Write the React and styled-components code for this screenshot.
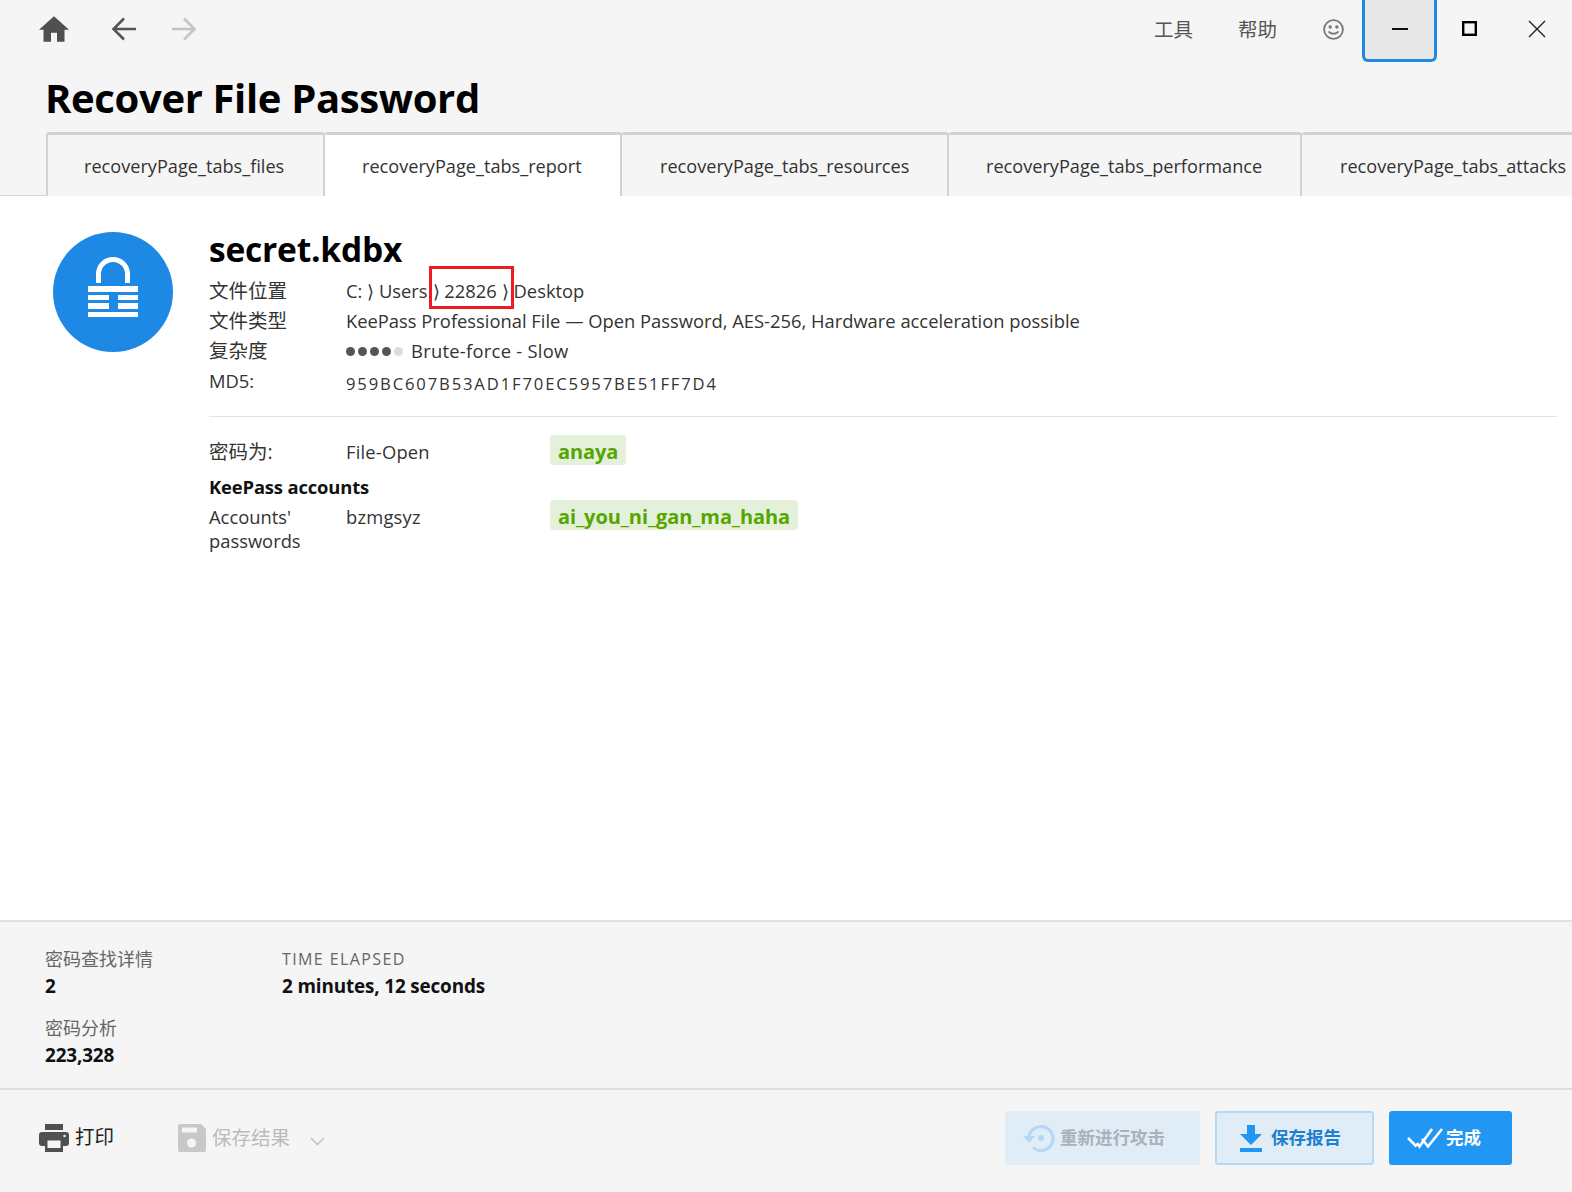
import styled, { createGlobalStyle } from 'styled-components';

const FONT = '"Open Sans", "Noto Sans CJK SC", sans-serif';

const GlobalStyle = createGlobalStyle`
  html, body {
    margin: 0;
    padding: 0;
    background: #f5f5f5;
    font-family: ${FONT};
    color: #333;
  }
`;

const Page = styled.div`
  width: 1572px;
  height: 1192px;
  display: flex;
  flex-direction: column;
  overflow: hidden;
  background: #f5f5f5;
`;

const TopBar = styled.div`
  height: 62px;
  display: flex;
  align-items: flex-start;
  padding-left: 39px;
`;

const NavIcon = styled.div`
  width: ${(p) => p.$w}px;
  height: 62px;
  display: flex;
  align-items: center;
  color: ${(p) => p.$color};
  margin-top: -2px;
`;

const Spacer = styled.div`
  flex: 1;
`;

const MenuItem = styled.div`
  width: ${(p) => p.$w}px;
  height: 62px;
  line-height: 60px;
  font-size: 19.5px;
  color: #555;
`;

const WinButton = styled.div`
  width: ${(p) => p.$w}px;
  height: 62px;
  box-sizing: border-box;
  display: flex;
  align-items: center;
  justify-content: center;
  padding-bottom: ${(p) => (p.$focused ? 1 : 5)}px;
  ${(p) =>
    p.$focused &&
    `
    background: #e8e8e8;
    border: 3px solid #1e88e5;
    border-top: none;
    border-radius: 0 0 6px 6px;
  `}
`;

const Title = styled.h1`
  margin: 0;
  padding-left: 45px;
  height: 70px;
  line-height: 72px;
  font-size: 40px;
  font-weight: 700;
  letter-spacing: -0.35px;
  color: #000;
`;

const Tabs = styled.div`
  height: 64px;
  display: flex;
  padding-left: 46px;
  position: relative;
  flex-shrink: 0;
  &::before {
    content: '';
    position: absolute;
    left: 0;
    bottom: 0;
    width: 46px;
    height: 1px;
    background: #d4d4d4;
  }
`;

const Tab = styled.div`
  width: ${(p) => p.$w}px;
  flex-shrink: 0;
  box-sizing: border-box;
  border: 2px solid #d2d2d2;
  border-top-width: 3px;
  border-bottom: none;
  border-right-width: ${(p) => (p.$last ? 0 : 2)}px;
  border-left-width: ${(p) => (p.$first ? 2 : 0)}px;
  border-radius: 3px 3px 0 0;
  background: ${(p) => (p.$active ? '#fff' : '#f5f5f5')};
  padding-left: ${(p) => p.$pad}px;
  line-height: 62px;
  font-size: 18.15px;
  white-space: nowrap;
  color: #333;
`;

const Content = styled.div`
  flex: 1;
  min-height: 0;
  background: #fff;
  display: flex;
  padding: 36px 15px 0 53px;
`;

const Emblem = styled.div`
  width: 120px;
  height: 120px;
  box-sizing: border-box;
  padding-bottom: 10px;
  border-radius: 50%;
  background: #1e88e5;
  flex-shrink: 0;
  display: flex;
  align-items: center;
  justify-content: center;
`;

const Details = styled.div`
  flex: 1;
  margin-left: 36px;
`;

const FileName = styled.h2`
  margin: 0 0 6px;
  height: 38px;
  line-height: 34px;
  font-size: 33.5px;
  font-weight: 700;
  letter-spacing: -0.2px;
  color: #000;
`;

const InfoRow = styled.div`
  display: flex;
  height: 30px;
  line-height: 30px;
`;

const Label = styled.div`
  width: 137px;
  flex-shrink: 0;
  font-size: ${(p) => (p.$latin ? 18.35 : 19.5)}px;
  color: #333;
`;

const Value = styled.div`
  font-size: 18.35px;
  color: #333;
  display: flex;
  align-items: center;
  white-space: nowrap;
`;

const Highlight = styled.span`
  display: inline-block;
  box-sizing: border-box;
  height: 43px;
  margin: 0 0 7px 1px;
  padding: 0 2px 0 1px;
  border: 3px solid #ed1c24;
  line-height: 44px;
`;

const Dots = styled.span`
  display: inline-flex;
  gap: 3px;
  margin-right: 8px;
`;

const Dot = styled.i`
  display: block;
  width: 9px;
  height: 9px;
  border-radius: 50%;
  background: ${(p) => (p.$off ? '#dcdcdc' : '#555')};
`;

const Speed = styled.span`
  letter-spacing: 0.28px;
`;

const Hash = styled.span`
  font-size: 16.6px;
  letter-spacing: 1.87px;
  padding-top: 6px;
`;

const Divider = styled.div`
  height: 1px;
  background: #e3e3e3;
  margin: 20px 0 18px;
`;

const ResultRow = styled.div`
  display: grid;
  grid-template-columns: 137px 204px 1fr;
  align-items: start;
  line-height: 24px;
  font-size: 18.35px;
  margin-bottom: ${(p) => p.$gap}px;
`;

const ResultLabel = styled.div`
  font-size: ${(p) => (p.$cjk ? 19.5 : 18.35)}px;
  padding-top: 5px;
  line-height: 24px;
`;

const ResultName = styled.div`
  padding-top: 5px;
  letter-spacing: 0.2px;
`;

const Password = styled.span`
  display: inline-block;
  height: 30px;
  line-height: 33px;
  padding: 0 8px;
  border-radius: 4px;
  background: #e5f0da;
  color: #55a600;
  font-size: 20px;
  font-weight: 700;
  letter-spacing: -0.1px;
`;

const SectionTitle = styled.div`
  font-size: 18.4px;
  font-weight: 700;
  line-height: 28px;
  color: #111;
  letter-spacing: -0.15px;
  margin-bottom: -1px;
`;

const Stats = styled.div`
  height: 170px;
  box-sizing: border-box;
  flex-shrink: 0;
  border-top: 2px solid #e0e0e0;
  border-bottom: 2px solid #dedede;
  padding: 25px 45px 0;
  display: grid;
  grid-template-columns: 237px 1fr;
  grid-auto-rows: 69px;
`;

const Stat = styled.div`
  display: flex;
  flex-direction: column;
`;

const StatLabel = styled.div`
  font-size: ${(p) => (p.$latin ? 16 : 18)}px;
  letter-spacing: ${(p) => (p.$latin ? 1.4 : 0)}px;
  line-height: 24px;
  color: #666;
`;

const StatValue = styled.div`
  font-size: 18.9px;
  font-weight: 700;
  line-height: 30px;
  color: #111;
  letter-spacing: -0.15px;
`;

const Actions = styled.div`
  height: 102px;
  box-sizing: border-box;
  flex-shrink: 0;
  display: flex;
  align-items: flex-start;
  padding: 21px 60px 0 39px;
`;

const TextAction = styled.div`
  display: flex;
  align-items: center;
  height: 54px;
  font-size: 19.5px;
  color: ${(p) => p.$color};
  margin-right: ${(p) => p.$mr}px;
  gap: ${(p) => p.$gap}px;
`;

const ActionText = styled.span`
  margin-bottom: ${(p) => p.$lift}px;
`;

const Chevron = styled.svg`
  margin: 6px 0 0 14px;
`;

const Button = styled.div`
  box-sizing: border-box;
  width: ${(p) => p.$w}px;
  height: 54px;
  margin-left: ${(p) => p.$ml}px;
  padding-left: ${(p) => p.$pad}px;
  border-radius: 3px;
  display: flex;
  align-items: center;
  gap: ${(p) => p.$gap}px;
  font-size: 17.5px;
  font-weight: 700;
  background: ${(p) => p.$bg};
  color: ${(p) => p.$color};
  border: ${(p) => (p.$outlined ? '2px solid #b5d8f5' : 'none')};
`;

const HomeIcon = () => (
  <svg width="30" height="26" viewBox="2 3 20 17" fill="currentColor">
    <path d="M10 20v-6h4v6h5v-8h3L12 3 2 12h3v8z" />
  </svg>
);

const LockIcon = () => (
  <svg width="50" height="60" viewBox="0 0 50 60" fill="#fff">
    <path d="M8 26V17a17 17 0 0 1 34 0v9h-5V17a12 12 0 0 0-24 0v9z" />
    <rect y="29" width="50" height="6" />
    <rect y="38" width="21" height="5" />
    <rect x="30" y="38" width="20" height="5" />
    <rect y="46" width="21" height="6" />
    <rect x="30" y="46" width="20" height="6" />
    <rect y="55" width="50" height="5" />
  </svg>
);

const ArrowIcon = ({ flip }) => (
  <svg
    width="26"
    height="24"
    viewBox="0 0 26 24"
    fill="none"
    stroke="currentColor"
    strokeWidth="2.6"
    style={flip ? { transform: 'scaleX(-1)' } : undefined}
  >
    <path d="M25 12H2M13 1.5 2.5 12 13 22.5" />
  </svg>
);

const SmileIcon = () => (
  <svg width="21" height="21" viewBox="0 0 21 21" fill="none" stroke="#777" strokeWidth="1.8">
    <circle cx="10.5" cy="10.5" r="9.4" />
    <circle cx="7.2" cy="8" r="0.8" fill="#777" />
    <circle cx="13.8" cy="8" r="0.8" fill="#777" />
    <path d="M5.8 12.3c1.2 3 8.2 3 9.4 0" />
  </svg>
);

const CloseIcon = () => (
  <svg width="18" height="18" viewBox="0 0 18 18" stroke="#222" strokeWidth="1.4">
    <path d="M1 1l16 16M17 1 1 17" />
  </svg>
);

const PrintIcon = () => (
  <svg width="30" height="28" viewBox="0 0 30 28" fill="#505050">
    <rect x="6" width="18" height="6" />
    <rect y="8" width="30" height="14" rx="3" />
    <rect x="6" y="15" width="18" height="13" />
    <rect x="8.5" y="16.5" width="13" height="7.5" fill="#f5f5f5" />
    <circle cx="25.5" cy="12" r="1.2" fill="#f5f5f5" />
  </svg>
);

const SaveIcon = () => (
  <svg width="28" height="28" viewBox="0 0 28 28">
    <path d="M2 0h21l5 5v21a2 2 0 0 1-2 2H2a2 2 0 0 1-2-2V2a2 2 0 0 1 2-2z" fill="#c8c8c8" />
    <rect x="4" y="3.5" width="15" height="5" fill="#f5f5f5" />
    <circle cx="13.5" cy="19" r="4.5" fill="#f5f5f5" />
  </svg>
);

const RetryIcon = () => (
  <svg width="32" height="30" viewBox="0 0 32 30" fill="none" stroke="#b3d7f5" strokeWidth="3">
    <path d="M6 15a12 12 0 1 1 4 9.5" />
    <path d="M0 13h12l-6 7z" fill="#b3d7f5" stroke="none" />
    <circle cx="18" cy="15" r="3" fill="#b3d7f5" stroke="none" />
  </svg>
);

const DownloadIcon = () => (
  <svg width="22" height="27" viewBox="0 0 22 27" fill="#2196f3">
    <path d="M7 0h8v9h7L11 20 0 9h7z" />
    <rect y="23" width="22" height="4" />
  </svg>
);

const DoubleCheckIcon = () => (
  <svg width="36" height="24" viewBox="0 0 36 24" fill="none" stroke="#fff" strokeWidth="2.6">
    <path d="M1 12l8.5 8.5M10 17l2.5 3.5L25 3M15 13l6 7.5L35 3" />
  </svg>
);

const tabs = [
  { name: 'recoveryPage_tabs_files', w: 279, pad: 36, first: true },
  { name: 'recoveryPage_tabs_report', w: 297, pad: 37, active: true },
  { name: 'recoveryPage_tabs_resources', w: 327, pad: 38 },
  { name: 'recoveryPage_tabs_performance', w: 353, pad: 37 },
  { name: 'recoveryPage_tabs_attacks', w: 320, pad: 38, last: true },
];

export default function App() {
  return (
    <Page>
      <GlobalStyle />
      <TopBar>
        <NavIcon $w={72} $color="#505050">
          <HomeIcon />
        </NavIcon>
        <NavIcon $w={60} $color="#555">
          <ArrowIcon />
        </NavIcon>
        <NavIcon $w={60} $color="#c4c4c4">
          <ArrowIcon flip />
        </NavIcon>
        <Spacer />
        <MenuItem $w={84}>工具</MenuItem>
        <MenuItem $w={85}>帮助</MenuItem>
        <NavIcon $w={39}>
          <SmileIcon />
        </NavIcon>
        <WinButton $w={75} $focused>
          <svg width="16" height="2" viewBox="0 0 16 2">
            <rect width="16" height="2" fill="#111" />
          </svg>
        </WinButton>
        <WinButton $w={64}>
          <svg width="15" height="15" viewBox="0 0 15 15" fill="none" stroke="#000" strokeWidth="2.4">
            <rect x="1.2" y="1.2" width="12.6" height="12.6" />
          </svg>
        </WinButton>
        <WinButton $w={71}>
          <CloseIcon />
        </WinButton>
      </TopBar>
      <Title>Recover File Password</Title>
      <Tabs>
        {tabs.map((t) => (
          <Tab key={t.name} $w={t.w} $pad={t.pad} $first={t.first} $last={t.last} $active={t.active}>
            {t.name}
          </Tab>
        ))}
      </Tabs>
      <Content>
        <Emblem>
          <LockIcon />
        </Emblem>
        <Details>
          <FileName>secret.kdbx</FileName>
          <InfoRow>
            <Label>文件位置</Label>
            <Value>
              C: ⟩ Users
              <Highlight>⟩ 22826 ⟩</Highlight>
              Desktop
            </Value>
          </InfoRow>
          <InfoRow>
            <Label>文件类型</Label>
            <Value>KeePass Professional File — Open Password, AES-256, Hardware acceleration possible</Value>
          </InfoRow>
          <InfoRow>
            <Label>复杂度</Label>
            <Value>
              <Dots>
                <Dot />
                <Dot />
                <Dot />
                <Dot />
                <Dot $off />
              </Dots>
              <Speed>Brute-force - Slow</Speed>
            </Value>
          </InfoRow>
          <InfoRow>
            <Label $latin>MD5:</Label>
            <Value>
              <Hash>959BC607B53AD1F70EC5957BE51FF7D4</Hash>
            </Value>
          </InfoRow>
          <Divider />
          <ResultRow $gap={8}>
            <ResultLabel $cjk>密码为:</ResultLabel>
            <ResultName>File-Open</ResultName>
            <div>
              <Password>anaya</Password>
            </div>
          </ResultRow>
          <SectionTitle>KeePass accounts</SectionTitle>
          <ResultRow>
            <ResultLabel>
              Accounts'
              <br />
              passwords
            </ResultLabel>
            <ResultName>bzmgsyz</ResultName>
            <div>
              <Password>ai_you_ni_gan_ma_haha</Password>
            </div>
          </ResultRow>
        </Details>
      </Content>
      <Stats>
        <Stat>
          <StatLabel>密码查找详情</StatLabel>
          <StatValue>2</StatValue>
        </Stat>
        <Stat>
          <StatLabel $latin>TIME ELAPSED</StatLabel>
          <StatValue>2 minutes, 12 seconds</StatValue>
        </Stat>
        <Stat>
          <StatLabel>密码分析</StatLabel>
          <StatValue>223,328</StatValue>
        </Stat>
      </Stats>
      <Actions>
        <TextAction $color="#222" $mr={64} $gap={6}>
          <PrintIcon />
          <ActionText $lift={5}>打印</ActionText>
        </TextAction>
        <TextAction $color="#bbb" $mr={0} $gap={6}>
          <SaveIcon />
          <ActionText $lift={4}>保存结果</ActionText>
          <Chevron width="15" height="9" viewBox="0 0 15 9" fill="none" stroke="#bbb" strokeWidth="1.3">
            <path d="M1 1l6.5 6.5L14 1" />
          </Chevron>
        </TextAction>
        <Spacer />
        <Button $w={195} $pad={18} $gap={5} $bg="#e0ecf6" $color="#a8b2bb">
          <RetryIcon />
          <ActionText $lift={3}>重新进行攻击</ActionText>
        </Button>
        <Button $w={159} $ml={15} $pad={23} $gap={9} $bg="#e0ecf6" $color="#1e7fd0" $outlined>
          <DownloadIcon />
          <ActionText $lift={3}>保存报告</ActionText>
        </Button>
        <Button $w={123} $ml={15} $pad={18} $gap={3} $bg="#2196f3" $color="#fff">
          <DoubleCheckIcon />
          <ActionText $lift={3}>完成</ActionText>
        </Button>
      </Actions>
    </Page>
  );
}
